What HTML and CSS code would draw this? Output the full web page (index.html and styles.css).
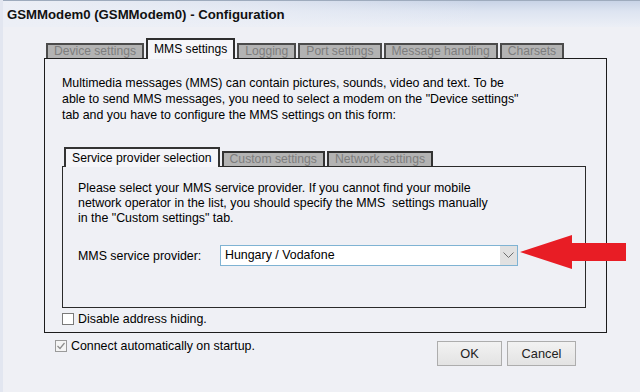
FILE: index.html
```html
<!DOCTYPE html>
<html>
<head>
<meta charset="utf-8">
<link rel="stylesheet" href="styles.css">
</head>
<body>
<div class="window">
  <div class="titlebar">GSMModem0 (GSMModem0) - Configuration</div>
  <div class="content">
    <div class="tabs">
      <div class="tab">Device settings</div>
      <div class="tab active">MMS settings</div>
      <div class="tab">Logging</div>
      <div class="tab">Port settings</div>
      <div class="tab">Message handling</div>
      <div class="tab">Charsets</div>
    </div>
    <div class="panel">
      <p class="desc">Multimedia messages (MMS) can contain pictures, sounds, video and text. To be<br>able to send MMS messages, you need to select a modem on the "Device settings"<br>tab and you have to configure the MMS settings on this form:</p>
      <div class="tabs inner-tabs">
        <div class="tab active">Service provider selection</div>
        <div class="tab">Custom settings</div>
        <div class="tab">Network settings</div>
      </div>
      <div class="inner-panel">
        <p class="inner-desc">Please select your MMS service provider. If you cannot find your mobile<br>network operator in the list, you should specify the MMS&nbsp; settings manually<br>in the "Custom settings" tab.</p>
        <div class="field">
          <span class="field-label">MMS service provider:</span>
          <div class="combo">
            <span class="combo-value">Hungary / Vodafone</span>
            <span class="combo-btn"><svg width="11" height="7" viewBox="0 0 11 7"><path d="M0.5 0.5 L5.5 5.5 L10.5 0.5" fill="none" stroke="#6d6d6d" stroke-width="1"/></svg></span>
          </div>
        </div>
      </div>
      <label class="check-row"><span class="checkbox"></span>Disable address hiding.</label>
    </div>
    <div class="footer">
      <label class="check-row"><span class="checkbox checked"><svg width="10" height="10" viewBox="0 0 10 10"><path d="M1.5 5 L4 7.5 L8.5 2" fill="none" stroke="#8c8c8c" stroke-width="1.2"/></svg></span>Connect automatically on startup.</label>
      <div class="buttons">
        <button class="btn btn-ok">OK</button>
        <button class="btn btn-cancel">Cancel</button>
      </div>
    </div>
  </div>
  <svg class="arrow" width="106" height="36" viewBox="0 0 106 36"><polygon points="0,18 52,1 52,9 106,9 106,27 52,27 52,35" fill="#e81d25"/></svg>
</div>
</body>
</html>
```

FILE: styles.css
```css
* { box-sizing: border-box; }
html, body { margin: 0; padding: 0; }
body {
  width: 640px;
  height: 392px;
  overflow: hidden;
  background: #eff0f5;
  font-family: "Liberation Sans", Arial, sans-serif;
  font-size: 12.4px;
  color: #000;
}
.window {
  position: relative;
  width: 640px;
  height: 392px;
  border-left: 3px solid #e2e6f0;
}
.titlebar {
  height: 27px;
  border-top: 1px solid #9eabbd;
  background:
    linear-gradient(to right, rgba(236,239,246,1) 0%, rgba(236,239,246,0.6) 40%, rgba(236,239,246,0) 75%),
    linear-gradient(to bottom, #c8d3e6 0%, #dde4f1 40%, #eceff6 100%);
  font-weight: bold;
  font-size: 13.2px;
  padding: 6px 0 0 4px;
  color: #111;
}
.content {
  padding: 10px 0 0 41px;
}
.tabs {
  display: flex;
  align-items: flex-end;
  gap: 2px;
  padding-left: 2px;
  height: 21px;
  position: relative;
  z-index: 1;
}
.tab {
  height: 15px;
  line-height: 13px;
  padding: 0 6px;
  border: 2px solid #4b4b4b;
  border-bottom: 0;
  background: #b3b3b3;
  color: #7e7e7e;
  font-size: 12.1px;
  white-space: nowrap;
}
.tab.active {
  height: 21px;
  line-height: 19px;
  margin-bottom: -1px;
  background: #f5f5f9;
  border-color: #2e2e2e;
  color: #000;
}
.panel {
  width: 563px;
  height: 275px;
  border: 1px solid #1c1c1c;
  padding: 0 0 0 17px;
}
.desc {
  margin: 16px 0 0 0;
  line-height: 16px;
}
.inner-tabs {
  margin-top: 23px;
  height: 20px;
}
.inner-tabs .tab {
  height: 15px;
  line-height: 13px;
  border-color: #333;
  font-size: 12.2px;
}
.inner-tabs .tab.active {
  height: 20px;
  line-height: 18px;
}
.inner-panel {
  width: 524px;
  height: 142px;
  border: 1px solid #2a2a2a;
  padding: 0 0 0 15px;
}
.inner-desc {
  margin: 14px 0 0 0;
  line-height: 15px;
}
.field {
  display: flex;
  align-items: center;
  margin-top: 19px;
}
.field-label {
  width: 142px;
}
.combo {
  width: 298px;
  height: 21px;
  border: 1px solid #7fb3d3;
  background: #fff;
  display: flex;
  align-items: stretch;
}
.combo-value {
  flex: 1;
  line-height: 19px;
  padding-left: 4px;
}
.combo-btn {
  width: 17px;
  background: #e1e1e1;
  display: flex;
  align-items: center;
  justify-content: center;
}
.check-row {
  display: flex;
  align-items: center;
  gap: 4px;
  height: 14px;
}
.panel > .check-row {
  margin-top: 4px;
}
.checkbox {
  width: 12px;
  height: 12px;
  border: 1px solid #7a7a7a;
  background: #fff;
  display: flex;
  align-items: center;
  justify-content: center;
}
.checkbox.checked {
  border-color: #9a9a9a;
  background: #f4f4f4;
}
.footer {
  width: 563px;
  display: flex;
  align-items: flex-start;
  padding: 6px 31px 0 11px;
}
.footer .check-row {
  margin-top: 0;
}
.buttons {
  margin-left: auto;
  display: flex;
  gap: 5px;
  margin-top: 2px;
}
.btn {
  height: 25px;
  border: 1px solid #adadad;
  background: linear-gradient(to bottom, #f2f2f2, #e3e3e3);
  font-family: "Liberation Sans", Arial, sans-serif;
  font-size: 12.8px;
  color: #222;
  padding: 0;
}
.btn-ok { width: 65px; }
.btn-cancel { width: 69px; }
.arrow {
  position: absolute;
  left: 517px;
  top: 234px;
}
```
